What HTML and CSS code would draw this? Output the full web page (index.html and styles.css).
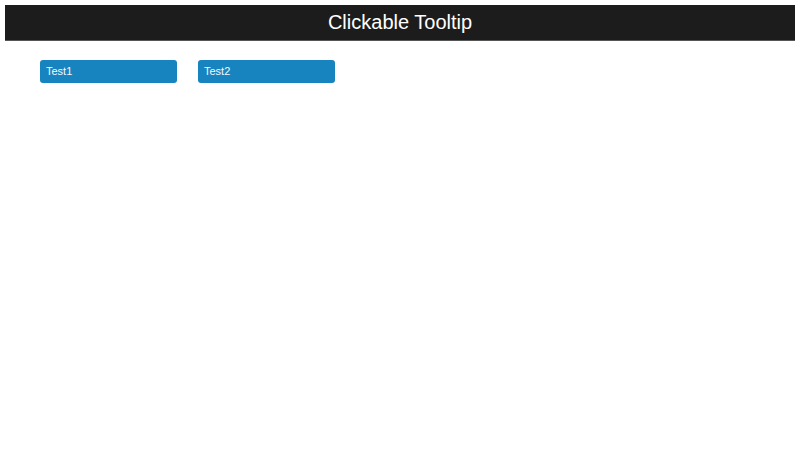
FILE: index.html
```html
<!DOCTYPE html>
<html lang="en">
<head>
    <meta charset="UTF-8">
    <title>Clickable Tooltip</title>
    <link rel="stylesheet" href="styles.css">
</head>
<body>
    <div class="header">
        <h1>Clickable Tooltip</h1>
    </div>

    <div class="buttons">
        <a href="#" class="tip-button">Test1</a>
        <a href="#" class="tip-button">Test2</a>
    </div>
</body>
</html>
```

FILE: styles.css
```css
* {
    margin: 0;
    padding: 0;
    box-sizing: border-box;
}

body {
    margin: 5px;
    font-family: "Liberation Sans", Arial, sans-serif;
    background: #fff;
}

.header {
    background: #1c1c1c;
    height: 36px;
    border-bottom: 1px solid #555;
    display: flex;
    align-items: center;
    justify-content: center;
}

.header h1 {
    color: #fff;
    font-size: 20px;
    font-weight: normal;
}

.buttons {
    display: flex;
    gap: 21px;
    padding: 19px 35px;
}

.tip-button {
    display: block;
    width: 137px;
    height: 23px;
    line-height: 23px;
    padding-left: 6px;
    background: #1784c0;
    color: #f4f8fb;
    border-radius: 3px;
    font-size: 11px;
    text-decoration: none;
}
```
